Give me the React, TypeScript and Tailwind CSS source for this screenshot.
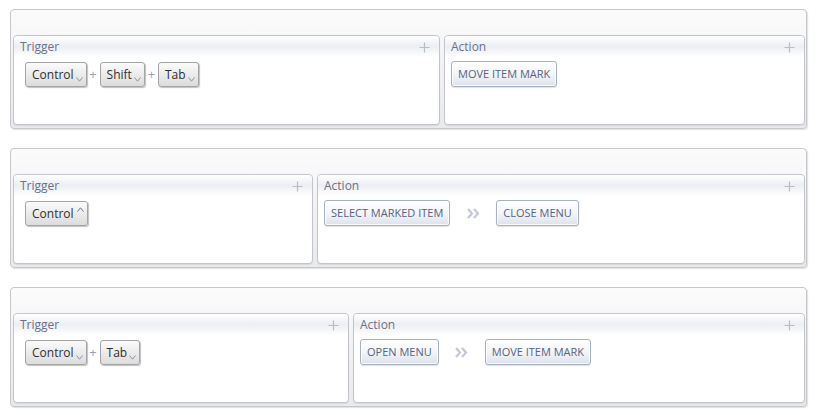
import React from "react";

type Binding = {
  keys: { label: string; dir: "down" | "up" }[];
  actions: string[];
  triggerWidth: string;
};

const bindings: Binding[] = [
  { keys: [{ label: "Control", dir: "down" }, { label: "Shift", dir: "down" }, { label: "Tab", dir: "down" }], actions: ["MOVE ITEM MARK"], triggerWidth: "w-[427px]" },
  { keys: [{ label: "Control", dir: "up" }], actions: ["SELECT MARKED ITEM", "CLOSE MENU"], triggerWidth: "w-[300px]" },
  { keys: [{ label: "Control", dir: "down" }, { label: "Tab", dir: "down" }], actions: ["OPEN MENU", "MOVE ITEM MARK"], triggerWidth: "w-[336px]" },
];

function Plus() {
  return (
    <svg width="11" height="11" viewBox="0 0 11 11" className="shrink-0">
      <path d="M5.5 0.5v10M0.5 5.5h10" stroke="#b9bdc9" strokeWidth="1.2" />
    </svg>
  );
}

function Chevron({ dir }: { dir: "down" | "up" }) {
  if (dir === "up") {
    return (
      <svg width="7" height="5" viewBox="0 0 7 5" className="mb-[9px] ml-[3px]">
        <path d="M0.5 4.5L3.5 0.8L6.5 4.5" fill="none" stroke="#6c7590" strokeWidth="1" />
      </svg>
    );
  }
  return (
    <svg width="7" height="5" viewBox="0 0 7 5" className="mt-[9px] ml-[2px]">
      <path d="M0.5 0.5L3.5 4.2L6.5 0.5" fill="none" stroke="#8a93ab" strokeWidth="1" />
    </svg>
  );
}

function Arrows() {
  return (
    <div className="flex w-[46px] justify-center">
      <svg width="13" height="11" viewBox="0 0 13 11">
        <path d="M1 1L5 5.5L1 10M7 1L11 5.5L7 10" fill="none" stroke="#c3c8d8" strokeWidth="2.2" />
      </svg>
    </div>
  );
}

function Key({ label, dir }: { label: string; dir: "down" | "up" }) {
  return (
    <div className="flex h-[25px] items-center rounded-[3px] border border-[#a4a4a4] bg-gradient-to-b from-[#fbfbfb] to-[#dcdcdc] pl-[6px] pr-[3px] text-[12px] text-[#2e2e2e] shadow-[1px_1px_1px_rgba(0,0,0,0.25)]">
      <span className="leading-none">{label}</span>
      <Chevron dir={dir} />
    </div>
  );
}

function ActionButton({ label }: { label: string }) {
  return (
    <div className="flex h-[26px] items-center rounded-[3px] border border-[#a6b0c3] bg-gradient-to-b from-[#ffffff] via-[#f3f5f9] to-[#dde2eb] px-[6px] text-[11px] text-[#56637e] shadow-[inset_0_0_0_1px_rgba(255,255,255,0.8),0_1px_1px_rgba(0,0,0,0.12)]">
      {label}
    </div>
  );
}

function Panel({ title, className, children }: { title: string; className: string; children: React.ReactNode }) {
  return (
    <div className={`flex flex-col rounded-[4px] border border-[#c3c5cc] bg-white shadow-[0_1px_1px_rgba(0,0,0,0.08)] ${className}`}>
      <div className="flex h-[21px] items-center justify-between rounded-t-[4px] bg-gradient-to-b from-[#ffffff] via-[#eceef3] to-[#ffffff] pl-[6px] pr-[9px] pt-[1px]">
        <span className="text-[12px] leading-none text-[#6a7088]">{title}</span>
        <Plus />
      </div>
      {children}
    </div>
  );
}

function Card({ b }: { b: Binding }) {
  return (
    <div className="flex h-[120px] flex-col rounded-[4px] border border-[#c6c7cb] bg-gradient-to-b from-[#fbfbfc] to-[#e9eaed] pb-[3px] pl-[2px] pr-[1px] pt-[25px] shadow-[1px_1px_1px_rgba(0,0,0,0.12)]">
      <div className="flex flex-1 gap-[4px]">
        <Panel title="Trigger" className={b.triggerWidth}>
          <div className="flex items-center pl-[11px] pt-[5px]">
            {b.keys.map((k, i) => (
              <React.Fragment key={i}>
                {i > 0 && <span className="w-[13px] text-center text-[13px] leading-none text-[#9aa0b2]">+</span>}
                <Key label={k.label} dir={k.dir} />
              </React.Fragment>
            ))}
          </div>
        </Panel>
        <Panel title="Action" className="flex-1">
          <div className="flex items-center pl-[6px] pt-[4px]">
            {b.actions.map((a, i) => (
              <React.Fragment key={i}>
                {i > 0 && <Arrows />}
                <ActionButton label={a} />
              </React.Fragment>
            ))}
          </div>
        </Panel>
      </div>
    </div>
  );
}

export default function App() {
  return (
    <div className="flex h-[415px] w-[816px] flex-col gap-[19px] bg-white pl-[10px] pr-[9px] pt-[9px] font-['Open_Sans',sans-serif]">
      {bindings.map((b, i) => (
        <Card key={i} b={b} />
      ))}
    </div>
  );
}
